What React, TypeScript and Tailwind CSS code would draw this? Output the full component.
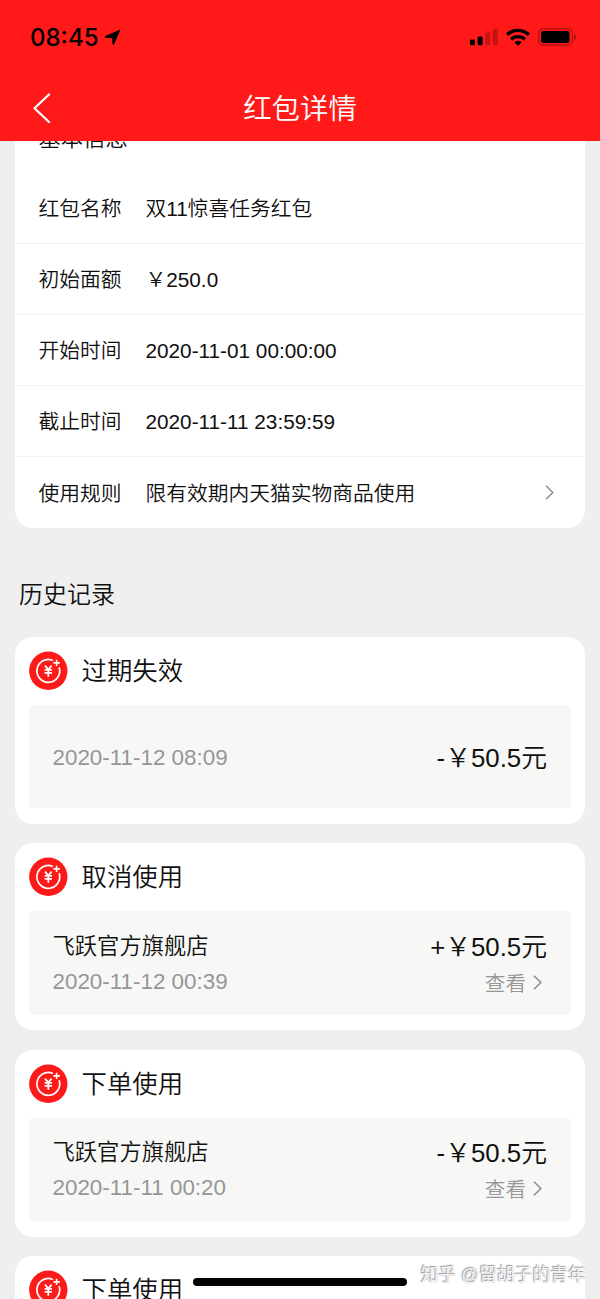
import React from "react";

const details = [
  { label: "红包名称", value: "双11惊喜任务红包" },
  { label: "初始面额", value: "￥250.0" },
  { label: "开始时间", value: "2020-11-01 00:00:00" },
  { label: "截止时间", value: "2020-11-11 23:59:59" },
  { label: "使用规则", value: "限有效期内天猫实物商品使用", link: true },
];

type Entry = { title: string; shop?: string; time: string; amount: string };

const history: Entry[] = [
  { title: "过期失效", time: "2020-11-12 08:09", amount: "-￥50.5元" },
  { title: "取消使用", shop: "飞跃官方旗舰店", time: "2020-11-12 00:39", amount: "+￥50.5元" },
  { title: "下单使用", shop: "飞跃官方旗舰店", time: "2020-11-11 00:20", amount: "-￥50.5元" },
  { title: "下单使用", amount: "", time: "" },
];

function Chevron() {
  return (
    <svg className="h-[15px] w-[9px]" viewBox="0 0 9 15" fill="none" stroke="#8f8f8f" strokeWidth="1.6">
      <path d="M1 .8 7.8 7.5 1 14.2" />
    </svg>
  );
}

function CoinIcon() {
  return (
    <svg className="size-[39px] shrink-0" viewBox="0 0 39 39" fill="none" stroke="#fff" strokeLinecap="round">
      <circle cx="19.3" cy="19.8" r="19.2" fill="#ff1a1a" stroke="none" />
      <path strokeWidth="1.7" d="M23.3 9.2A11.4 11.4 0 1 0 30.3 16.8" />
      <path strokeWidth="1.6" strokeLinecap="butt" d="M27.6 8.7v6.4M24.4 11.9h6.4" />
      <path strokeWidth="1.7" strokeLinecap="butt" d="m16 14.6 3.3 4 3.3-4M19.3 18v7.8M15.6 18.9h7.4M15.6 21.9h7.4" />
    </svg>
  );
}

function StatusBar() {
  return (
    <div className="flex h-[74px] items-center pl-[30px] pr-[23px]">
      <span className="w-[69px] pt-px font-['Inter'] text-[24px] font-medium leading-none">08:45</span>
      <svg className="ml-[5px] size-[17px]" viewBox="0 0 17 17" stroke="#000" strokeLinejoin="round">
        <path d="M15.6 1.4 9.7 15.2 9 15.2 8.7 8.6 1.2 8.3 1.2 7.6Z" />
      </svg>
      <div className="ml-auto flex items-center">
        <svg className="h-[18px] w-[28px]" viewBox="0 0 28 18">
          <rect x="0" y="11.5" width="5" height="5.8" rx="1.2" />
          <rect x="7.6" y="8.5" width="5" height="8.8" rx="1.2" />
          <rect x="15.2" y="4.5" width="5" height="12.8" rx="1.2" fill="#c31414" />
          <rect x="22.8" y=".8" width="5" height="16.5" rx="1.2" fill="#c31414" />
        </svg>
        <svg className="ml-2 h-[18px] w-[24px]" viewBox="0 0 24 18" fill="none" stroke="#000" strokeWidth="3.4">
          <path d="M1.1 6.8a15.6 15.6 0 0 1 21.8 0" />
          <path d="M5.1 11.4a9.9 9.9 0 0 1 13.8 0" />
          <path d="M12 17.7 8.3 14.2a5.3 5.3 0 0 1 7.4 0Z" fill="#000" stroke="none" />
        </svg>
        <svg className="ml-2 h-[18px] w-[39px]" viewBox="0 0 39 18">
          <rect x=".8" y=".8" width="33.6" height="16.4" rx="4.5" fill="none" stroke="#a91010" strokeWidth="1.2" />
          <rect x="3" y="3" width="28.5" height="12" rx="2.2" />
          <path d="M36 6c2.8 1 2.8 5 0 6Z" fill="#a91010" />
        </svg>
      </div>
    </div>
  );
}

function HistoryCard({ entry }: { entry: Entry }) {
  return (
    <article className="h-[187px] shrink-0 rounded-[18px] bg-white px-[14px] pt-[14px]">
      <div className="flex items-center gap-[14px]">
        <CoinIcon />
        <h3 className="pt-[2px] text-[25.4px] leading-[37px]">{entry.title}</h3>
      </div>
      <div className="mt-[15px] flex h-[103.5px] items-center justify-between rounded-[4px] bg-[#f7f7f6] px-6 pt-[2px]">
        <div className="flex flex-col">
          {entry.shop && <span className="text-[22.3px] leading-[35px]">{entry.shop}</span>}
          <span className="text-[22.4px] leading-[35px] text-[#969696]">{entry.time}</span>
        </div>
        <div className="flex flex-col items-end pt-px">
          <span className="text-[25.8px] leading-[36px]">{entry.amount}</span>
          {entry.shop && (
            <span className="flex items-center gap-[7px] pr-[5px] text-[20.6px] leading-[35px] text-[#969696]">
              <span className="pt-px">查看</span>
              <Chevron />
            </span>
          )}
        </div>
      </div>
    </article>
  );
}

export default function App() {
  return (
    <div className="relative flex h-[1299px] w-[600px] flex-col overflow-hidden bg-[#efefef] font-['Liberation_Sans','Noto_Sans_CJK_SC',sans-serif] font-[350] text-[#101010]">
      <header className="z-10 h-[140.5px] shrink-0 bg-[#ff1919] text-black">
        <StatusBar />
        <div className="grid h-[68px] grid-cols-[60px_1fr_60px] items-center text-white">
          <svg className="ml-[33px] h-[30px] w-[18px]" viewBox="0 0 18 30" fill="none" stroke="#fff" strokeWidth="2.2" strokeLinecap="round" strokeLinejoin="round">
            <path d="M16 1.5 1.5 15.3 16 29" />
          </svg>
          <h1 className="pt-[3px] text-center text-[28.4px] leading-none">红包详情</h1>
        </div>
      </header>

      <main className="flex flex-col pl-[14.5px] pr-[15px]">
        <section className="-mt-[20px] rounded-[18px] bg-white">
          <h2 className="h-[52.2px] pl-[24px] text-[22.3px] leading-[36px]">基本信息</h2>
          {details.map((item) => (
            <div
              key={item.label}
              className="flex h-[71.1px] items-center border-b border-[#f1f1f1] pl-[24px] pr-[31px] text-[20.75px] last:border-b-0"
            >
              <span className="w-[107px] pt-[2px]">{item.label}</span>
              <span className="pt-[2px]">{item.value}</span>
              {item.link && (
                <span className="ml-auto">
                  <Chevron />
                </span>
              )}
            </div>
          ))}
        </section>

        <h2 className="pl-[4.5px] pt-[49px] text-[24px] leading-[36px]">历史记录</h2>
        <div className="mt-[23.8px] flex flex-col gap-[19.4px]">
          {history.map((entry, i) => (
            <HistoryCard key={i} entry={entry} />
          ))}
        </div>
      </main>

      <div className="absolute left-[193px] top-[1278px] h-[8px] w-[214px] rounded-full bg-black" />
      <div className="absolute right-[14px] top-[1263px] whitespace-nowrap text-[17.8px] font-normal leading-[25px] text-[#f4f4f4] [text-shadow:-1px_-1px_1px_#999,0_0_1px_#aaa]">
        知乎 @留胡子的青年
      </div>
    </div>
  );
}
